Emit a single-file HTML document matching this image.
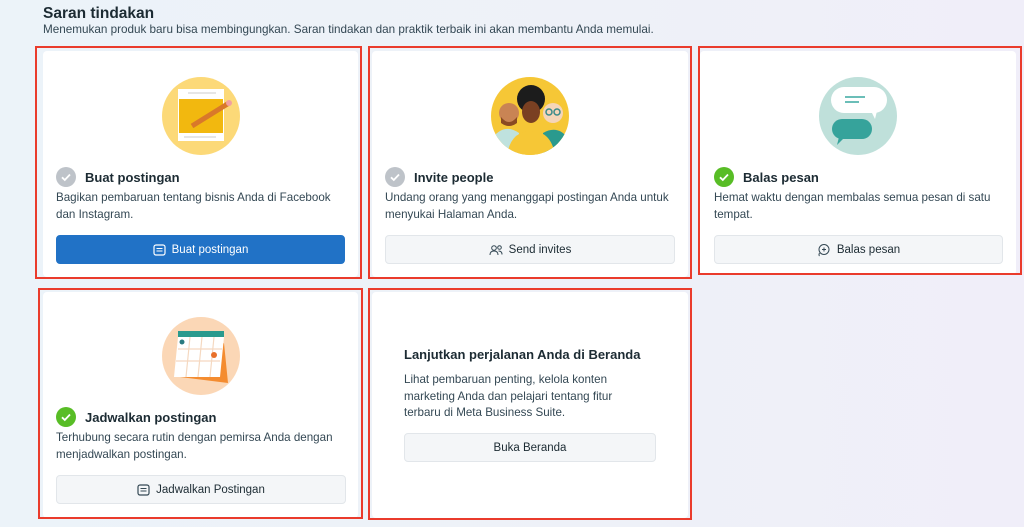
<!DOCTYPE html>
<html><head><meta charset="utf-8"><style>
*{box-sizing:border-box;margin:0;padding:0}
body{width:1024px;height:527px;overflow:hidden;position:relative;font-family:"Liberation Sans",sans-serif;color:#1c2b33;background:linear-gradient(90deg,#ecf3f9 0%,#eef1f8 60%,#f0eef9 100%)}
.h1{position:absolute;left:43px;top:5px;font-size:15.5px;font-weight:bold;color:#1c2b33}
.sub{position:absolute;left:43px;top:23px;font-size:11.7px;color:#344854}
.red{position:absolute;border:2px solid #ea3b2c}
.card{position:absolute;background:#fff;border-radius:4px}
.circ{position:absolute;width:78px;height:78px;border-radius:50%;overflow:hidden}
.chk{position:absolute;width:20px;height:20px;border-radius:50%}
.chk svg{position:absolute;left:0;top:0}
.t{position:absolute;font-size:13px;font-weight:bold;color:#1c2b33}
.d{position:absolute;font-size:11.6px;line-height:16.5px;color:#344854}
.btn{position:absolute;height:29px;border-radius:4px;background:#f4f6f8;border:1px solid #e2e6ea;font-size:11.5px;color:#1c2b33;display:flex;align-items:center;justify-content:center;gap:6px}
.btn.blue{background:#2172c6;border-color:#2172c6;color:#fff}
</style></head><body>
<div class="h1">Saran tindakan</div>
<div class="sub">Menemukan produk baru bisa membingungkan. Saran tindakan dan praktik terbaik ini akan membantu Anda memulai.</div>

<div class="card" style="left:43px;top:51px;width:315px;height:226px"></div>
<div class="card" style="left:372px;top:51px;width:316px;height:226px"></div>
<div class="card" style="left:700px;top:51px;width:316px;height:224px"></div>
<div class="card" style="left:43px;top:292px;width:315px;height:226px"></div>
<div class="card" style="left:372px;top:292px;width:316px;height:226px"></div>

<div class="red" style="left:35px;top:46px;width:327px;height:233px"></div>
<div class="red" style="left:368px;top:46px;width:324px;height:233px"></div>
<div class="red" style="left:698px;top:46px;width:324px;height:229px"></div>
<div class="red" style="left:38px;top:288px;width:325px;height:231px"></div>
<div class="red" style="left:368px;top:288px;width:324px;height:232px"></div>

<!-- card1 -->
<div class="circ" style="left:162px;top:77px;background:#fcd978">
<svg width="78" height="78"><rect x="16" y="12" width="46" height="52" fill="#fff"/><rect x="17" y="22" width="44" height="34" fill="#f2b80f"/><line x1="26" y1="16" x2="54" y2="16" stroke="#ddd" stroke-width="1.5"/><line x1="22" y1="60" x2="54" y2="60" stroke="#ddd" stroke-width="1.5"/><line x1="30" y1="49" x2="67" y2="26" stroke="#d9782a" stroke-width="5"/><circle cx="67" cy="26" r="3" fill="#f2a0a0"/></svg></div>
<div class="chk" style="left:56px;top:167px;background:#bec3c9"><svg width="20" height="20"><path d="M6 10.3l2.8 2.7 5.2-5.5" fill="none" stroke="#fff" stroke-width="1.8"/></svg></div>
<div class="t" style="left:85px;top:170px">Buat postingan</div>
<div class="d" style="left:56px;top:190px">Bagikan pembaruan tentang bisnis Anda di Facebook<br>dan Instagram.</div>
<div class="btn blue" style="left:56px;top:235px;width:289px"><svg width="13" height="12"><rect x="1" y="1" width="11" height="10" rx="2" fill="none" stroke="#fff" stroke-width="1.2"/><path d="M3.5 4.5h6M3.5 7h6" stroke="#fff" stroke-width="1"/></svg>Buat postingan</div>

<!-- card2 -->
<div class="circ" style="left:491px;top:77px;background:#f6c736">
<svg width="78" height="78"><path d="M2 60 q12 -14 26 -4 v22 h-26z" fill="#bfe2de"/><circle cx="18" cy="36" r="10" fill="#c98454"/><path d="M10 40 q8 10 16 0 v6 q-8 6 -16 0z" fill="#8a4a22"/><path d="M52 56 q14 -8 24 4 v18 h-24z" fill="#2a9a8e"/><circle cx="62" cy="36" r="10" fill="#f5d5b8"/><circle cx="58" cy="35" r="3" fill="none" stroke="#3a8a8a" stroke-width="1.5"/><circle cx="66" cy="35" r="3" fill="none" stroke="#3a8a8a" stroke-width="1.5"/><circle cx="40" cy="22" r="14" fill="#1c1c1c"/><ellipse cx="40" cy="35" rx="9" ry="11" fill="#7a4022"/><path d="M16 78 q4 -24 24 -24 q20 0 24 24z" fill="#f6c736"/></svg></div>
<div class="chk" style="left:385px;top:167px;background:#bec3c9"><svg width="20" height="20"><path d="M6 10.3l2.8 2.7 5.2-5.5" fill="none" stroke="#fff" stroke-width="1.8"/></svg></div>
<div class="t" style="left:414px;top:170px">Invite people</div>
<div class="d" style="left:385px;top:190px">Undang orang yang menanggapi postingan Anda untuk<br>menyukai Halaman Anda.</div>
<div class="btn" style="left:385px;top:235px;width:290px"><svg width="14" height="12"><circle cx="5" cy="4" r="2.3" fill="none" stroke="#344854"/><circle cx="10.5" cy="3.5" r="1.8" fill="none" stroke="#344854"/><path d="M1 11q0-4 4-4t4 4M9.5 7q3.5 0 3.5 3.5" fill="none" stroke="#344854"/></svg>Send invites</div>

<!-- card3 -->
<div class="circ" style="left:819px;top:77px;background:#bfe0da">
<svg width="78" height="78"><rect x="12" y="10" width="56" height="26" rx="13" fill="#fff"/><path d="M52 34l4 8 2-8z" fill="#fff"/><line x1="26" y1="20" x2="46" y2="20" stroke="#3aa8a0" stroke-width="1.5"/><line x1="26" y1="25" x2="40" y2="25" stroke="#3aa8a0" stroke-width="1.5"/><rect x="13" y="42" width="40" height="20" rx="10" fill="#36a39b"/><path d="M20 60l-2 8 6-6z" fill="#36a39b"/></svg></div>
<div class="chk" style="left:714px;top:167px;background:#58bd26"><svg width="20" height="20"><path d="M6 10.3l2.8 2.7 5.2-5.5" fill="none" stroke="#fff" stroke-width="1.8"/></svg></div>
<div class="t" style="left:743px;top:170px">Balas pesan</div>
<div class="d" style="left:714px;top:190px">Hemat waktu dengan membalas semua pesan di satu<br>tempat.</div>
<div class="btn" style="left:714px;top:235px;width:289px"><svg width="14" height="14"><circle cx="7" cy="6.5" r="5" fill="none" stroke="#344854"/><path d="M7 4.5v4M5 6.5h4" stroke="#344854"/><path d="M2.5 10q-1 2 0 3" fill="none" stroke="#344854"/></svg>Balas pesan</div>

<!-- card4 -->
<div class="circ" style="left:162px;top:317px;background:#fbd7b6">
<svg width="78" height="78"><path d="M18 60l48 6-4-40z" fill="#f48c30"/><path d="M16 20h46l-4 40h-46z" fill="#fff"/><rect x="16" y="14" width="46" height="6" fill="#2a9a8e"/><path d="M16 32h44M14 44h44M28 20l-4 40M40 20l-4 40M52 20l-4 40" stroke="#f5d8c0" stroke-width="1.2"/><circle cx="20" cy="25" r="2.5" fill="#2a7a80"/><circle cx="52" cy="38" r="3" fill="#e8702a"/></svg></div>
<div class="chk" style="left:56px;top:407px;background:#58bd26"><svg width="20" height="20"><path d="M6 10.3l2.8 2.7 5.2-5.5" fill="none" stroke="#fff" stroke-width="1.8"/></svg></div>
<div class="t" style="left:85px;top:410px">Jadwalkan postingan</div>
<div class="d" style="left:56px;top:430px">Terhubung secara rutin dengan pemirsa Anda dengan<br>menjadwalkan postingan.</div>
<div class="btn" style="left:56px;top:475px;width:290px"><svg width="13" height="12"><rect x="1" y="1" width="11" height="10" rx="2" fill="none" stroke="#344854" stroke-width="1.2"/><path d="M3.5 4.5h6M3.5 7h6" stroke="#344854" stroke-width="1"/></svg>Jadwalkan Postingan</div>

<!-- card5 -->
<div class="t" style="left:404px;top:347px">Lanjutkan perjalanan Anda di Beranda</div>
<div class="d" style="left:404px;top:372px">Lihat pembaruan penting, kelola konten<br>marketing Anda dan pelajari tentang fitur<br>terbaru di Meta Business Suite.</div>
<div class="btn" style="left:404px;top:433px;width:252px">Buka Beranda</div>
</body></html>
